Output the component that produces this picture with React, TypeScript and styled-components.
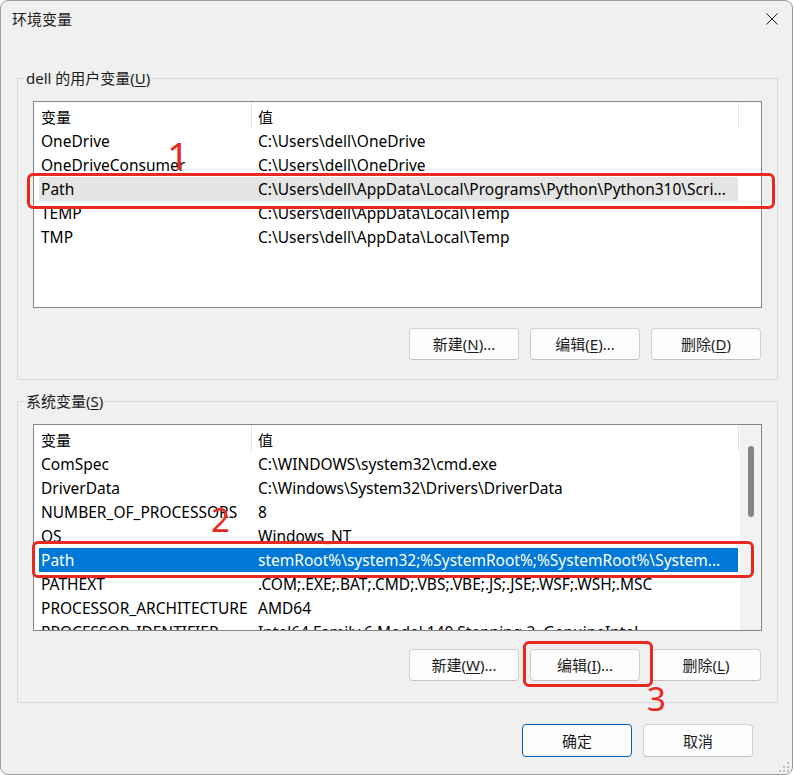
import React from "react";
import styled, { createGlobalStyle } from "styled-components";

const GlobalStyle = createGlobalStyle`
  html, body { margin: 0; padding: 0; background: #ffffff; }
  body { font-family: "Noto Sans", "Noto Sans CJK SC", sans-serif; }
`;

const FONT = `"Noto Sans", "Noto Sans CJK SC", sans-serif`;
const RED = "#e8291f";

const Window = styled.div`
  position: relative;
  box-sizing: border-box;
  width: 793px;
  height: 775px;
  border: 1px solid #9e9e9e;
  border-radius: 8px;
  background: #f0f0f0;
  display: flex;
  flex-direction: column;
  font-family: ${FONT};
  font-size: 15px;
  color: #000;
  overflow: hidden;
`;

const TitleBar = styled.div`
  height: 36px;
  flex: none;
  display: flex;
  align-items: center;
  justify-content: space-between;
  padding: 0 14px 0 11px;
`;

const Title = styled.div`
  font-size: 15px;
  line-height: 20px;
  color: #1a1a1a;
`;

const CloseIcon = styled.svg`
  width: 12px;
  height: 12px;
  display: block;
`;

const Body = styled.div`
  display: flex;
  flex-direction: column;
  padding: 31px 14px 0 16px;
`;

const Group = styled.fieldset<{ $mt: number; $pb: number }>`
  margin: ${(p) => p.$mt}px 0 0 0;
  padding: 13px 15px ${(p) => p.$pb}px 15px;
  border: 1px solid #dadada;
  min-width: 0;
`;

const Legend = styled.legend`
  margin-left: -9px;
  padding: 0 2px;
  font-size: 15px;
  line-height: 20px;
  color: #1a1a1a;
`;

const Mn = styled.span`
  text-decoration: underline;
  text-underline-offset: 2px;
  text-decoration-thickness: 1px;
`;

const ListBox = styled.div`
  box-sizing: border-box;
  height: 207px;
  border: 1px solid #868686;
  background: #ffffff;
  display: flex;
  overflow: hidden;
`;

const ListContent = styled.div`
  flex: 1;
  min-width: 0;
  display: flex;
  flex-direction: column;
  overflow: hidden;
  font-size: 15.5px;
`;

const HeaderRow = styled.div`
  display: flex;
  flex: none;
  height: 27px;
`;

const HeaderCell = styled.div<{ $w: number; $pl: number }>`
  box-sizing: border-box;
  width: ${(p) => p.$w}px;
  height: 27px;
  padding: 3px 0 0 ${(p) => p.$pl}px;
  line-height: 24px;
  font-size: 15px;
  border-right: 1px solid #e5e5e5;
  white-space: nowrap;
`;

type RowState = "normal" | "hover" | "selected";

const Row = styled.div<{ $state: RowState }>`
  display: flex;
  flex: none;
  width: 699px;
  height: 24px;
  margin-left: 5px;
  line-height: 24px;
  white-space: nowrap;
  background: ${(p) =>
    p.$state === "selected" ? "#0078d7" : p.$state === "hover" ? "#e5e5e5" : "transparent"};
  color: ${(p) => (p.$state === "selected" ? "#ffffff" : "#000000")};
`;

const NameCell = styled.div`
  box-sizing: border-box;
  width: 213px;
  flex: none;
  padding-left: 2px;
  overflow: hidden;
`;

const ValueCell = styled.div`
  flex: 1;
  min-width: 0;
  padding-left: 6px;
  overflow: hidden;
`;

const ScrollTrack = styled.div`
  flex: none;
  width: 21px;
  background: #f2f2f2;
  display: flex;
  justify-content: center;
  padding-top: 21px;
`;

const ScrollThumb = styled.div`
  width: 6px;
  height: 71px;
  border-radius: 3px;
  background: #858585;
`;

const ButtonRow = styled.div<{ $mt: number }>`
  display: flex;
  justify-content: flex-end;
  gap: 11px;
  margin-top: ${(p) => p.$mt}px;
  padding-right: 1px;
`;

const Footer = styled.div`
  display: flex;
  justify-content: flex-end;
  gap: 11px;
  margin-top: 21px;
  padding-right: 25px;
`;

const Button = styled.button<{ $h: number; $primary?: boolean }>`
  box-sizing: border-box;
  width: 110px;
  height: ${(p) => p.$h}px;
  padding: 0;
  border: 1px solid ${(p) => (p.$primary ? "#005fb8" : "#d0d0d0")};
  border-bottom-color: ${(p) => (p.$primary ? "#005fb8" : "#c2c2c2")};
  border-radius: 4px;
  background: #fdfdfd;
  font-family: ${FONT};
  font-size: 15px;
  line-height: 20px;
  color: #1b1b1b;
`;

const RedBox = styled.div<{ $x: number; $y: number; $w: number; $h: number }>`
  position: absolute;
  left: ${(p) => p.$x}px;
  top: ${(p) => p.$y}px;
  width: ${(p) => p.$w}px;
  height: ${(p) => p.$h}px;
  box-sizing: border-box;
  border: 3px solid ${RED};
  border-radius: 6px;
  pointer-events: none;
`;

const Marker = styled.span<{ $x: number; $y: number; $size: number }>`
  position: absolute;
  left: ${(p) => p.$x}px;
  top: ${(p) => p.$y}px;
  font-family: "Noto Sans", sans-serif;
  font-weight: 400;
  font-size: ${(p) => p.$size}px;
  line-height: 1;
  color: ${RED};
  pointer-events: none;
`;

const Grip = styled.svg`
  position: absolute;
  right: 2px;
  bottom: 1px;
  width: 12px;
  height: 12px;
`;

type Item = { name: string; value: string; state?: RowState };

const userVars: Item[] = [
  { name: "OneDrive", value: "C:\\Users\\dell\\OneDrive" },
  { name: "OneDriveConsumer", value: "C:\\Users\\dell\\OneDrive" },
  {
    name: "Path",
    value: "C:\\Users\\dell\\AppData\\Local\\Programs\\Python\\Python310\\Scri...",
    state: "hover",
  },
  { name: "TEMP", value: "C:\\Users\\dell\\AppData\\Local\\Temp" },
  { name: "TMP", value: "C:\\Users\\dell\\AppData\\Local\\Temp" },
];

const sysVars: Item[] = [
  { name: "ComSpec", value: "C:\\WINDOWS\\system32\\cmd.exe" },
  { name: "DriverData", value: "C:\\Windows\\System32\\Drivers\\DriverData" },
  { name: "NUMBER_OF_PROCESSORS", value: "8" },
  { name: "OS", value: "Windows_NT" },
  {
    name: "Path",
    value: "stemRoot%\\system32;%SystemRoot%;%SystemRoot%\\System...",
    state: "selected",
  },
  { name: "PATHEXT", value: ".COM;.EXE;.BAT;.CMD;.VBS;.VBE;.JS;.JSE;.WSF;.WSH;.MSC" },
  { name: "PROCESSOR_ARCHITECTURE", value: "AMD64" },
  { name: "PROCESSOR_IDENTIFIER", value: "Intel64 Family 6 Model 140 Stepping 2, GenuineIntel" },
];

function VarList({ items, scroll }: { items: Item[]; scroll?: boolean }) {
  return (
    <ListBox>
      <ListContent>
        <HeaderRow>
          <HeaderCell $w={218} $pl={7}>变量</HeaderCell>
          <HeaderCell $w={487} $pl={6}>值</HeaderCell>
        </HeaderRow>
        {items.map((it, i) => (
          <Row key={i} $state={it.state ?? "normal"}>
            <NameCell>{it.name}</NameCell>
            <ValueCell>{it.value}</ValueCell>
          </Row>
        ))}
      </ListContent>
      {scroll && (
        <ScrollTrack>
          <ScrollThumb />
        </ScrollTrack>
      )}
    </ListBox>
  );
}

export default function App() {
  return (
    <>
      <GlobalStyle />
      <Window>
        <TitleBar>
          <Title>环境变量</Title>
          <CloseIcon viewBox="0 0 12 12">
            <path d="M0.5 0.5 L11.5 11.5 M11.5 0.5 L0.5 11.5" stroke="#1a1a1a" strokeWidth="1" fill="none" />
          </CloseIcon>
        </TitleBar>
        <Body>
          <Group $mt={0} $pb={19}>
            <Legend>
              dell 的用户变量(<Mn>U</Mn>)
            </Legend>
            <VarList items={userVars} />
            <ButtonRow $mt={20}>
              <Button $h={32}>新建(<Mn>N</Mn>)...</Button>
              <Button $h={32}>编辑(<Mn>E</Mn>)...</Button>
              <Button $h={32}>删除(<Mn>D</Mn>)</Button>
            </ButtonRow>
          </Group>
          <Group $mt={11} $pb={21}>
            <Legend>
              系统变量(<Mn>S</Mn>)
            </Legend>
            <VarList items={sysVars} scroll />
            <ButtonRow $mt={18}>
              <Button $h={32}>新建(<Mn>W</Mn>)...</Button>
              <Button $h={32}>编辑(<Mn>I</Mn>)...</Button>
              <Button $h={32}>删除(<Mn>L</Mn>)</Button>
            </ButtonRow>
          </Group>
          <Footer>
            <Button $h={33} $primary>确定</Button>
            <Button $h={33}>取消</Button>
          </Footer>
        </Body>

        <RedBox $x={26} $y={172} $w={748} $h={36} />
        <RedBox $x={31} $y={540} $w={722} $h={37} />
        <RedBox $x={522} $y={640} $w={130} $h={46} />
        <Marker $x={166} $y={134} $size={39}>1</Marker>
        <Marker $x={210} $y={502} $size={33}>2</Marker>
        <Marker $x={646} $y={681} $size={33}>3</Marker>

        <Grip viewBox="0 0 12 12">
          <g fill="#bcbcbc">
            <rect x="9" y="1" width="2" height="2" />
            <rect x="5" y="5" width="2" height="2" />
            <rect x="9" y="5" width="2" height="2" />
            <rect x="1" y="9" width="2" height="2" />
            <rect x="5" y="9" width="2" height="2" />
            <rect x="9" y="9" width="2" height="2" />
          </g>
        </Grip>
      </Window>
    </>
  );
}
